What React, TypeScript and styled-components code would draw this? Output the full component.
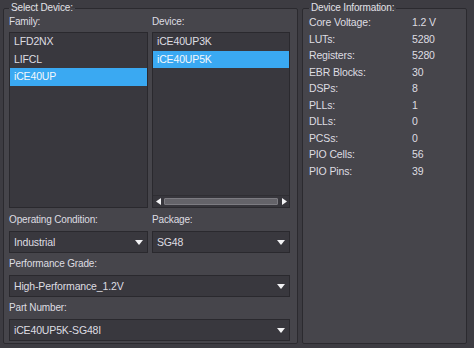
import React from 'react'
import styled, { createGlobalStyle } from 'styled-components'

const GlobalStyle = createGlobalStyle`
  html, body {
    margin: 0;
    padding: 0;
    background: #3d3c42;
  }
  body {
    font-family: "Liberation Sans", Arial, sans-serif;
    font-size: 10px;
    letter-spacing: -0.15px;
    color: #dedde2;
  }
`

const Window = styled.div`
  display: flex;
  gap: 4px;
  width: 474px;
  height: 348px;
  box-sizing: border-box;
  padding: 1px 0 0 3px;
`

const Group = styled.fieldset<{ $width: number; $pad: string }>`
  margin: 0;
  min-width: 0;
  width: ${p => p.$width}px;
  height: 343px;
  box-sizing: border-box;
  padding: ${p => p.$pad};
  border: 1px solid #2b2a2f;
  border-radius: 2px;
  background: #46454b;
  display: flex;
  flex-direction: column;
`

const Legend = styled.legend`
  padding: 0 2px;
  line-height: 14px;
  color: #e2e1e6;
`

const Label = styled.div`
  line-height: 14px;
  white-space: nowrap;
`

const ListRow = styled.div`
  display: grid;
  grid-template-columns: 139px 138px;
  gap: 4px;
`

const Column = styled.div`
  display: flex;
  flex-direction: column;
  gap: 3px;
`

const ListBox = styled.div`
  height: 176px;
  box-sizing: border-box;
  border: 1px solid #2a292e;
  background: #39383e;
  display: flex;
  flex-direction: column;
`

const Items = styled.div`
  flex: 1;
`

const Item = styled.div<{ $selected?: boolean }>`
  height: 17.5px;
  line-height: 17.5px;
  padding-left: 4px;
  font-size: 10.5px;
  background: ${p => (p.$selected ? '#3aa9f2' : 'transparent')};
  color: ${p => (p.$selected ? '#f4f8fc' : '#dedde2')};
`

const HScroll = styled.div`
  height: 11px;
  display: flex;
  align-items: center;
  border-top: 1px solid #2f2e33;
  background: #37363c;
`

const ScrollArrow = styled.div`
  width: 10px;
  display: flex;
  justify-content: center;
`

const Track = styled.div`
  flex: 1;
  padding: 0 1px;
`

const Thumb = styled.div`
  height: 7px;
  box-sizing: border-box;
  border: 1px solid #7c7b81;
  background: #646369;
  border-radius: 1px;
`

const Field = styled.div`
  display: flex;
  flex-direction: column;
  gap: 4px;
  margin-top: 4px;
`

const FieldRow = styled.div`
  display: grid;
  grid-template-columns: 139px 138px;
  gap: 4px;
  margin-top: 1px;
`

const Combo = styled.div`
  height: 22px;
  box-sizing: border-box;
  border: 1px solid #2a292e;
  background: #39383e;
  display: flex;
  align-items: center;
  justify-content: space-between;
  padding: 0 4px 0 4px;
  font-size: 10.5px;
`

const InfoGrid = styled.div`
  display: grid;
  grid-template-columns: 103px 1fr;
  grid-auto-rows: 16.5px;
  align-items: center;
  margin-top: -1px;
  font-size: 10.5px;
`

const DownArrow = () => (
  <svg width="8" height="5" viewBox="0 0 8 5">
    <polygon points="0,0 8,0 4,5" fill="#f2f2f4" />
  </svg>
)

const SideArrow = ({ dir }: { dir: 'left' | 'right' }) => (
  <svg width="5" height="7" viewBox="0 0 5 7">
    <polygon points={dir === 'left' ? '5,0 5,7 0,3.5' : '0,0 0,7 5,3.5'} fill="#f2f2f4" />
  </svg>
)

const families = ['LFD2NX', 'LIFCL', 'iCE40UP']
const devices = ['iCE40UP3K', 'iCE40UP5K']

const info: [string, string][] = [
  ['Core Voltage:', '1.2 V'],
  ['LUTs:', '5280'],
  ['Registers:', '5280'],
  ['EBR Blocks:', '30'],
  ['DSPs:', '8'],
  ['PLLs:', '1'],
  ['DLLs:', '0'],
  ['PCSs:', '0'],
  ['PIO Cells:', '56'],
  ['PIO Pins:', '39'],
]

export default function App() {
  return (
    <>
      <GlobalStyle />
      <Window>
        <Group $width={295} $pad="0 7px 0 5px">
          <Legend>Select Device:</Legend>
          <ListRow>
            <Column>
              <Label>Family:</Label>
              <ListBox>
                <Items>
                  {families.map(f => (
                    <Item key={f} $selected={f === 'iCE40UP'}>{f}</Item>
                  ))}
                </Items>
              </ListBox>
            </Column>
            <Column>
              <Label>Device:</Label>
              <ListBox>
                <Items>
                  {devices.map(d => (
                    <Item key={d} $selected={d === 'iCE40UP5K'}>{d}</Item>
                  ))}
                </Items>
                <HScroll>
                  <ScrollArrow><SideArrow dir="left" /></ScrollArrow>
                  <Track><Thumb /></Track>
                  <ScrollArrow><SideArrow dir="right" /></ScrollArrow>
                </HScroll>
              </ListBox>
            </Column>
          </ListRow>
          <FieldRow>
            <Field>
              <Label>Operating Condition:</Label>
              <Combo>Industrial<DownArrow /></Combo>
            </Field>
            <Field>
              <Label>Package:</Label>
              <Combo>SG48<DownArrow /></Combo>
            </Field>
          </FieldRow>
          <Field>
            <Label>Performance Grade:</Label>
            <Combo>High-Performance_1.2V<DownArrow /></Combo>
          </Field>
          <Field>
            <Label>Part Number:</Label>
            <Combo>iCE40UP5K-SG48I<DownArrow /></Combo>
          </Field>
        </Group>
        <Group $width={165} $pad="0 6px">
          <Legend>Device Information:</Legend>
          <InfoGrid>
            {info.map(([k, v]) => (
              <React.Fragment key={k}>
                <span>{k}</span>
                <span>{v}</span>
              </React.Fragment>
            ))}
          </InfoGrid>
        </Group>
      </Window>
    </>
  )
}
